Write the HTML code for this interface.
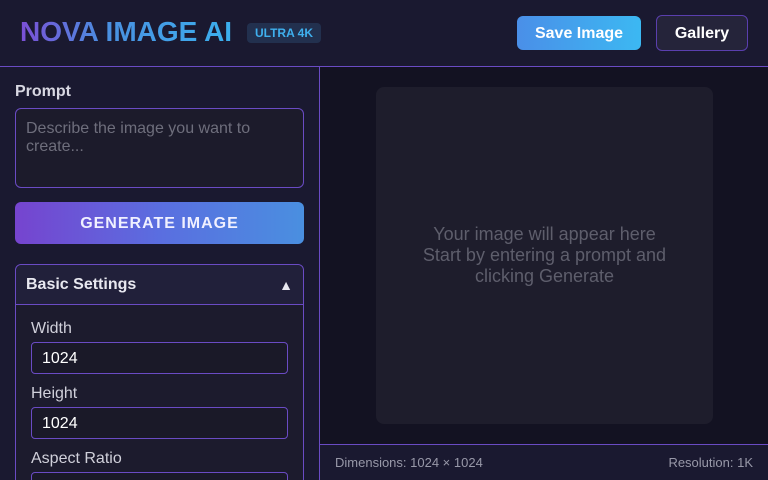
<!DOCTYPE html>
<html style="width:768px;height:480px;overflow:hidden"><head><style>
*{box-sizing:border-box;margin:0;padding:0}
body{width:768px;height:480px;overflow:hidden;background:#16152a;font-family:"Liberation Sans",sans-serif;color:#e8e8f0;position:relative}
.hdr{position:absolute;left:0;top:0;width:768px;height:67px;background:#1a1930;border-bottom:1px solid #6a4bc4}
.logo{position:absolute;left:20px;top:15px;font-size:28px;font-weight:bold;background:linear-gradient(90deg,#7b4fd6,#4a8fe0 40%,#3bb0ee);-webkit-background-clip:text;color:transparent;line-height:34px}
.badge{position:absolute;left:247px;top:23px;width:74px;height:20px;background:#22304e;border-radius:4px;color:#3fb0ee;font-size:12px;font-weight:bold;text-align:center;line-height:20px}
.save{position:absolute;left:517px;top:16px;width:124px;height:34px;border-radius:6px;background:linear-gradient(90deg,#4a8fe8,#3cb8f2);color:#fff;font-weight:bold;font-size:16px;text-align:center;line-height:35px}
.gal{position:absolute;left:656px;top:15px;width:92px;height:36px;border-radius:6px;background:#25243a;border:1px solid #5a3fae;color:#fff;font-weight:bold;font-size:16px;text-align:center;line-height:35px}
.side{position:absolute;left:0;top:67px;width:320px;height:413px;background:#1a1930;border-right:1px solid #6a4bc4}
.lbl{position:absolute;left:15px;top:83px;font-weight:bold;font-size:16px;color:#d8d8e2}
.ta{position:absolute;left:15px;top:108px;width:289px;height:80px;border:1px solid #6a4bc4;border-radius:6px;background:#1c1b2b;padding:11px 10px;color:#6e6e7c;font-size:16px;line-height:18px}
.gen{position:absolute;left:15px;top:202px;width:289px;height:42px;border-radius:6px;background:linear-gradient(90deg,#7644cf,#5a6ee0 50%,#4a8fe0);color:#f0f0ff;font-weight:bold;font-size:16px;letter-spacing:1px;text-align:center;line-height:43px}
.bs{position:absolute;left:15px;top:264px;width:289px;height:230px;border:1px solid #6a4bc4;border-radius:6px;background:#1c1b2d}
.bsh{height:40px;border-bottom:1px solid #6a4bc4;background:#21203a;padding:0 10px;font-weight:bold;font-size:16px;line-height:40px;display:flex;justify-content:space-between;border-radius:6px 6px 0 0}
.fl{position:absolute;left:15px;font-size:16px;color:#d0d0da}
.in{position:absolute;left:15px;width:257px;height:32px;border:1px solid #6a4bc4;border-radius:4px;background:#1a1928;padding-left:10px;line-height:31px;font-size:16px;color:#fff}
.main{position:absolute;left:320px;top:67px;width:448px;height:377px;background:#131222}
.ph{position:absolute;left:376px;top:87px;width:337px;height:337px;background:#1e1d2c;border-radius:8px;color:#5e5e6c;font-size:18px;text-align:center;line-height:21px;padding-top:137px}
.foot{position:absolute;left:320px;top:444px;width:448px;height:36px;background:#1a1930;border-top:1px solid #6a4bc4;font-size:13px;color:#9898a8;line-height:36px;padding:0 15px;display:flex;justify-content:space-between}
.clip{position:absolute;left:0;top:0;width:768px;height:480px;overflow:hidden}
</style></head><body><div class="clip">
<div class="hdr"><div class="logo">NOVA IMAGE AI</div><div class="badge">ULTRA 4K</div><div class="save">Save Image</div><div class="gal">Gallery</div></div>
<div class="side"></div>
<div class="lbl">Prompt</div>
<div class="ta">Describe the image you want to create...</div>
<div class="gen">GENERATE IMAGE</div>
<div class="bs"><div class="bsh"><span>Basic Settings</span><span style="font-size:14px">▲</span></div>
<div class="fl" style="top:55px">Width</div><div class="in" style="top:77px">1024</div>
<div class="fl" style="top:120px">Height</div><div class="in" style="top:142px">1024</div>
<div class="fl" style="top:185px">Aspect Ratio</div><div class="in" style="top:207px"></div>
</div>
<div class="main"></div>
<div class="ph">Your image will appear here<br>Start by entering a prompt and<br>clicking Generate</div>
<div class="foot"><span>Dimensions: 1024 × 1024</span><span>Resolution: 1K</span></div>
</div></body></html>
